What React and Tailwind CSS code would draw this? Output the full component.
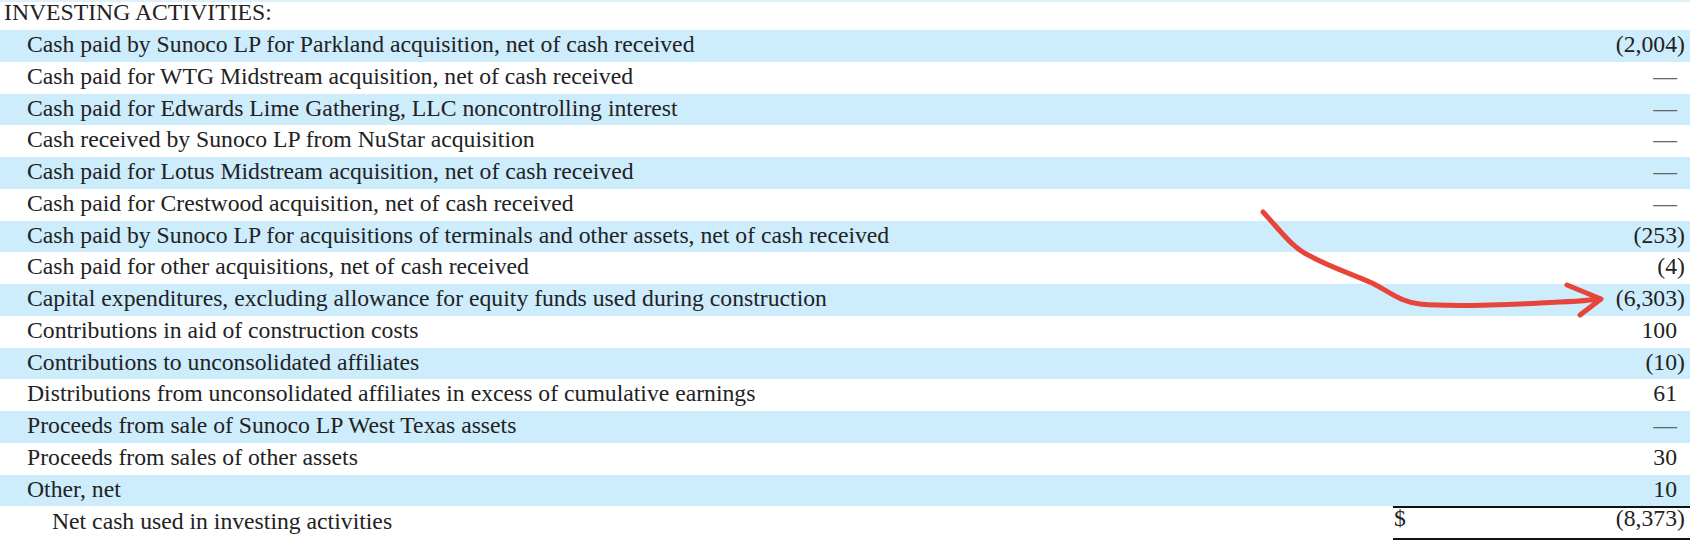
import React from 'react';

const rows = [
  ['Cash paid by Sunoco LP for Parkland acquisition, net of cash received', '(2,004)'],
  ['Cash paid for WTG Midstream acquisition, net of cash received', '—'],
  ['Cash paid for Edwards Lime Gathering, LLC noncontrolling interest', '—'],
  ['Cash received by Sunoco LP from NuStar acquisition', '—'],
  ['Cash paid for Lotus Midstream acquisition, net of cash received', '—'],
  ['Cash paid for Crestwood acquisition, net of cash received', '—'],
  ['Cash paid by Sunoco LP for acquisitions of terminals and other assets, net of cash received', '(253)'],
  ['Cash paid for other acquisitions, net of cash received', '(4)'],
  ['Capital expenditures, excluding allowance for equity funds used during construction', '(6,303)'],
  ['Contributions in aid of construction costs', '100'],
  ['Contributions to unconsolidated affiliates', '(10)'],
  ['Distributions from unconsolidated affiliates in excess of cumulative earnings', '61'],
  ['Proceeds from sale of Sunoco LP West Texas assets', '—'],
  ['Proceeds from sales of other assets', '30'],
  ['Other, net', '10'],
];

function Amount({ value }) {
  if (value === '—') {
    return (
      <div className="flex justify-end">
        <span className="text-[#666]">—</span>
        <span className="w-[13px]" />
      </div>
    );
  }
  const neg = value.endsWith(')');
  return (
    <div className="flex justify-end">
      <span>{neg ? value.slice(0, -1) : value}</span>
      <span className="w-[13px] text-left">{neg ? ')' : ''}</span>
    </div>
  );
}

export default function App() {
  return (
    <div
      className="relative w-[1690px] h-[542px] overflow-hidden bg-white text-[23.7px] text-[#222]"
      style={{ fontFamily: '"Liberation Serif", "Times New Roman", serif' }}
    >
      <div className="h-[2px] bg-[#dff0f9]" />
      <div className="h-[28px] pl-[4px] leading-[21px]">INVESTING ACTIVITIES:</div>

      {rows.map(([label, value], i) => (
        <div
          key={label}
          className={`flex h-[31.75px] leading-[29px] ${i % 2 === 0 ? 'bg-[#cdecfc]' : 'bg-white'}`}
        >
          <div className="flex-1 pl-[27px] whitespace-nowrap">{label}</div>
          <div className="w-[297px]">
            <Amount value={value} />
          </div>
        </div>
      ))}

      <div className="flex h-[36px]">
        <div className="flex-1 pl-[52px] pt-[5px] leading-[20px]">Net cash used in investing activities</div>
        <div className="w-[297px] h-[34px] border-y-2 border-[#111] leading-[20px] flex justify-between">
          <span className="pl-[1px]">$</span>
          <div className="flex">
            <span>(8,373</span>
            <span className="w-[13px]">)</span>
          </div>
        </div>
      </div>

      <svg className="absolute left-0 top-0 pointer-events-none" width="1690" height="542">
        <path
          d="M1263 212 C1280 230 1292 248 1310 256 C1330 267 1352 274 1372 283 C1390 292 1400 302 1420 304 C1450 307 1500 305 1540 303 C1565 302 1585 301 1600 299"
          fill="none"
          stroke="#e8453a"
          strokeWidth="5"
          strokeLinecap="round"
          strokeLinejoin="round"
        />
        <path
          d="M1567 285 L1601 299 L1580 315"
          fill="none"
          stroke="#e8453a"
          strokeWidth="5"
          strokeLinecap="round"
          strokeLinejoin="round"
        />
      </svg>
    </div>
  );
}
